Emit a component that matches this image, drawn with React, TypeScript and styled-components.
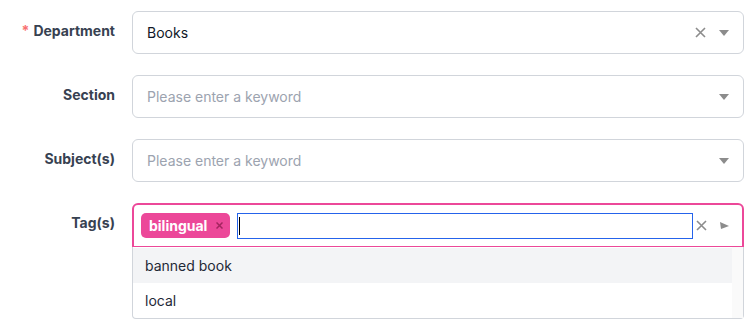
import React from 'react'
import styled, { createGlobalStyle } from 'styled-components'

const GlobalStyle = createGlobalStyle`
  body {
    margin: 0;
    background: #ffffff;
    font-family: Inter, "Noto Sans", sans-serif;
  }
`

const Form = styled.div`
  display: grid;
  grid-template-columns: 132px 1fr;
  row-gap: 21px;
  padding: 11px 12px 0 0;
`

const Label = styled.label`
  box-sizing: border-box;
  padding-right: 17px;
  text-align: right;
  line-height: 40px;
  font-size: 14px;
  font-weight: 700;
  color: #374151;
`

const Required = styled.span`
  color: #f87171;
  margin-right: 4px;
`

const Field = styled.div`
  display: flex;
  flex-direction: column;
`

const SelectBox = styled.div<{ $open?: boolean }>`
  box-sizing: border-box;
  display: flex;
  align-items: center;
  height: ${(p) => (p.$open ? '44px' : '43px')};
  padding: ${(p) => (p.$open ? '0 13px 0 7px' : '0 14px 0 14px')};
  border: ${(p) => (p.$open ? '2px solid #ec4899' : '1px solid #d1d5db')};
  border-bottom-width: 1px;
  border-radius: ${(p) => (p.$open ? '6px 6px 0 0' : '6px')};
  background: #ffffff;
  gap: 7px;
`

const Value = styled.span<{ $placeholder?: boolean }>`
  flex: 1;
  font-size: 14px;
  color: ${(p) => (p.$placeholder ? '#9ca3af' : '#111827')};
`

const Chip = styled.span`
  display: inline-flex;
  align-items: center;
  height: 25px;
  padding: 0 7px 0 8px;
  gap: 9px;
  border-radius: 5px;
  background: #ec4899;
  color: #ffffff;
  font-size: 14px;
  font-weight: 700;
`

const SearchInput = styled.div`
  box-sizing: border-box;
  flex: 1;
  height: 26px;
  margin-top: 1px;
  margin-right: -4px;
  border: 1px solid #2563eb;
  display: flex;
  align-items: center;
  padding-left: 1px;
`

const Caret = styled.span`
  width: 1px;
  height: 18px;
  background: #000000;
`

const Icons = styled.div`
  display: flex;
  align-items: center;
  gap: 13px;
`

const Dropdown = styled.div`
  box-sizing: border-box;
  display: flex;
  border: 1px solid #d1d5db;
  border-top: none;
  border-radius: 0 0 4px 4px;
  background: #ffffff;
`

const OptionList = styled.div`
  flex: 1;
  padding-top: 1px;
`

const Option = styled.div<{ $active?: boolean }>`
  height: 35px;
  line-height: 35px;
  padding-left: 12px;
  font-size: 14px;
  color: #1f2937;
  background: ${(p) => (p.$active ? '#f3f4f6' : 'transparent')};
`

const Gutter = styled.div`
  width: 11px;
  background: #fafafa;
`

const ChipClose = () => (
  <svg width="7" height="7" viewBox="0 0 7 7">
    <path d="M0.5 0.5 L6.5 6.5 M6.5 0.5 L0.5 6.5" stroke="#a3245f" strokeWidth="1.5" />
  </svg>
)

const ClearIcon = () => (
  <svg width="11" height="11" viewBox="0 0 11 11">
    <path d="M1 1 L10 10 M10 1 L1 10" stroke="#8c8c8c" strokeWidth="1.6" />
  </svg>
)

const ArrowDown = () => (
  <svg width="10" height="6" viewBox="0 0 10 6">
    <path d="M0 0 H10 L5 6 Z" fill="#8c8c8c" />
  </svg>
)

const ArrowRight = () => (
  <svg width="9" height="9" viewBox="0 0 9 9">
    <path d="M0 1 L9 5 L1 8 Z" fill="#8c8c8c" />
  </svg>
)

export default function App() {
  return (
    <>
      <GlobalStyle />
      <Form>
        <Label>
          <Required>*</Required>Department
        </Label>
        <Field>
          <SelectBox>
            <Value>Books</Value>
            <Icons>
              <ClearIcon />
              <ArrowDown />
            </Icons>
          </SelectBox>
        </Field>

        <Label>Section</Label>
        <Field>
          <SelectBox>
            <Value $placeholder>Please enter a keyword</Value>
            <Icons>
              <ArrowDown />
            </Icons>
          </SelectBox>
        </Field>

        <Label>Subject(s)</Label>
        <Field>
          <SelectBox>
            <Value $placeholder>Please enter a keyword</Value>
            <Icons>
              <ArrowDown />
            </Icons>
          </SelectBox>
        </Field>

        <Label>Tag(s)</Label>
        <Field>
          <SelectBox $open>
            <Chip>
              bilingual
              <ChipClose />
            </Chip>
            <SearchInput>
              <Caret />
            </SearchInput>
            <Icons>
              <ClearIcon />
              <ArrowRight />
            </Icons>
          </SelectBox>
          <Dropdown>
            <OptionList>
              <Option $active>banned book</Option>
              <Option>local</Option>
            </OptionList>
            <Gutter />
          </Dropdown>
        </Field>
      </Form>
    </>
  )
}
